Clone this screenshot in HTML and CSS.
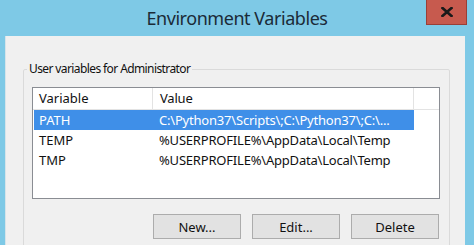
FILE: index.html
```html
<!DOCTYPE html>
<html>
<head>
<meta charset="utf-8">
<link rel="stylesheet" href="styles.css">
</head>
<body>
<div class="window">
  <div class="titlebar">
    <div class="title">Environment Variables</div>
    <div class="close">
      <svg width="12" height="10" viewBox="0 0 12 10"><path d="M1.5 1 L10.5 9 M10.5 1 L1.5 9" stroke="#1a1a1a" stroke-width="2.6" stroke-linecap="square"/></svg>
    </div>
  </div>
  <div class="client">
    <fieldset class="group">
      <legend class="legend">User variables for Administrator</legend>
      <div class="list">
        <div class="row header">
          <div class="c1">Variable</div>
          <div class="c2">Value</div>
        </div>
        <div class="row selected">
          <div class="c1">PATH</div>
          <div class="c2">C:\Python37\Scripts\;C:\Python37\;C:\...</div>
        </div>
        <div class="row">
          <div class="c1">TEMP</div>
          <div class="c2">%USERPROFILE%\AppData\Local\Temp</div>
        </div>
        <div class="row">
          <div class="c1">TMP</div>
          <div class="c2">%USERPROFILE%\AppData\Local\Temp</div>
        </div>
      </div>
      <div class="buttons">
        <button class="btn">New...</button>
        <button class="btn">Edit...</button>
        <button class="btn">Delete</button>
      </div>
    </fieldset>
  </div>
</div>
</body>
</html>
```

FILE: styles.css
```css
html, body {
  margin: 0;
  padding: 0;
}
body {
  font-family: "Noto Sans", "Open Sans", sans-serif;
  font-size: 13px;
  color: #111;
}
.window {
  width: 474px;
  height: 245px;
  background: #7ec9e6;
  overflow: hidden;
  display: flex;
  flex-direction: column;
}
.titlebar {
  position: relative;
  height: 36px;
  flex: none;
}
.title {
  text-align: center;
  font-size: 18px;
  letter-spacing: -0.45px;
  line-height: 37px;
  color: #1b2b38;
  padding-right: 0;
}
.close {
  position: absolute;
  left: 426px;
  top: 0;
  width: 39px;
  height: 24px;
  background: #c75a4e;
  border: 1px solid #9a3f37;
  border-top: none;
  display: flex;
  align-items: center;
  justify-content: center;
}
.client {
  margin-left: 5px;
  width: 460px;
  flex: 1;
  background: #f0f0f0;
  border-left: 1px solid #d6e4ea;
  box-sizing: border-box;
}
.group {
  margin: 25px 0 0 17px;
  width: 427px;
  box-sizing: border-box;
  border: 1px solid #dadada;
  border-radius: 2px;
  padding: 0 9px 40px 8px;
}
.legend {
  padding: 0 2px;
  margin-left: -5px;
  line-height: 16px;
  font-size: 12px;
  letter-spacing: -0.6px;
  color: #111;
}
.list {
  margin-top: 10px;
  height: 112px;
  box-sizing: border-box;
  border: 1px solid #8a8d93;
  background: #fff;
  padding: 0 0 0 0;
}
.row {
  display: flex;
  height: 20px;
  line-height: 20px;
  margin: 0 1px;
  white-space: nowrap;
}
.row .c1 {
  width: 113px;
  padding-left: 5px;
}
.row .c2 {
  width: 254px;
  padding-left: 7px;
  letter-spacing: -0.2px;
}
.row.header {
  height: 21px;
  line-height: 21px;
  margin: 0;
  border-bottom: 1px solid #e3e3e3;
}
.row.header .c1 {
  width: 113px;
  padding-left: 6px;
  border-right: 1px solid #e3e3e3;
}
.row.header .c2 {
  width: 253px;
  padding-left: 7px;
  border-right: 1px solid #e3e3e3;
}
.row.selected {
  background: #3f8fe8;
  color: #fff;
  width: 380px;
}
.buttons {
  margin-top: 15px;
  display: flex;
  justify-content: flex-end;
  gap: 11px;
  padding-right: 1px;
}
.btn {
  width: 88px;
  height: 25px;
  box-sizing: border-box;
  font-family: "Noto Sans", "Open Sans", sans-serif;
  font-size: 13px;
  color: #111;
  background: #e2e2e2;
  border: 1px solid #acacac;
  border-radius: 0;
  padding: 0;
}
```
